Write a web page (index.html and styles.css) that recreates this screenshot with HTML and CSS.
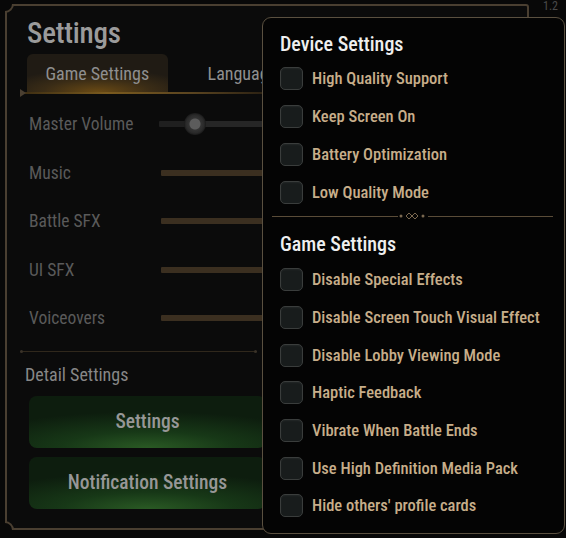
FILE: index.html
```html
<!DOCTYPE html>
<html>
<head>
<meta charset="utf-8">
<link rel="stylesheet" href="styles.css">
</head>
<body>
<div class="screen">
  <span class="version">1.2</span>
  <div class="frame">
    <span class="notch notch-tl"></span>
    <span class="notch notch-bl"></span>
    <div class="main">
      <h1 class="title">Settings</h1>
      <div class="tabs">
        <div class="tab active">Game Settings</div>
        <div class="tab">Language</div>
      </div>
      <div class="tabline"></div>
      <div class="sliders">
        <div class="srow"><span class="slabel">Master Volume</span><div class="track grey"><span class="knob"></span></div></div>
        <div class="srow"><span class="slabel">Music</span><div class="track"></div></div>
        <div class="srow"><span class="slabel">Battle SFX</span><div class="track"></div></div>
        <div class="srow"><span class="slabel">UI SFX</span><div class="track"></div></div>
        <div class="srow"><span class="slabel">Voiceovers</span><div class="track"></div></div>
      </div>
      <div class="divider"></div>
      <div class="detail">Detail Settings</div>
      <div class="btn">Settings</div>
      <div class="btn">Notification Settings</div>
    </div>
  </div>

  <div class="panel">
    <h2 class="ptitle">Device Settings</h2>
    <ul class="opts">
      <li class="opt"><span class="box"></span>High Quality Support</li>
      <li class="opt"><span class="box"></span>Keep Screen On</li>
      <li class="opt"><span class="box"></span>Battery Optimization</li>
      <li class="opt"><span class="box"></span>Low Quality Mode</li>
    </ul>
    <div class="orn">
      <svg width="30" height="8" viewBox="0 0 30 8">
        <circle cx="3" cy="4" r="1.5" fill="#7a6850"/>
        <path d="M8 4 L11 1 L14 4 L11 7 Z M14 4 L17 1 L20 4 L17 7 Z" fill="none" stroke="#7a6850" stroke-width="1"/>
        <circle cx="25" cy="4" r="1.5" fill="#7a6850"/>
      </svg>
    </div>
    <h2 class="ptitle second">Game Settings</h2>
    <ul class="opts game">
      <li class="opt"><span class="box"></span>Disable Special Effects</li>
      <li class="opt"><span class="box"></span>Disable Screen Touch Visual Effect</li>
      <li class="opt"><span class="box"></span>Disable Lobby Viewing Mode</li>
      <li class="opt"><span class="box"></span>Haptic Feedback</li>
      <li class="opt"><span class="box"></span>Vibrate When Battle Ends</li>
      <li class="opt"><span class="box"></span>Use High Definition Media Pack</li>
      <li class="opt"><span class="box"></span>Hide others' profile cards</li>
    </ul>
  </div>
</div>
</body>
</html>
```

FILE: styles.css
```css
* { box-sizing: border-box; margin: 0; padding: 0; }
html, body { width: 566px; height: 538px; overflow: hidden; background: #070707; }
body { font-family: Roboto, "Liberation Sans", sans-serif; font-stretch: condensed; }

.screen { position: relative; width: 566px; height: 538px; padding: 4px 0 0 5px; background: #080808; }

.version { position: absolute; left: 543px; top: 0; font-size: 12px; line-height: 12px; color: #4a4a4a; }

.frame {
  position: relative;
  width: 524px;
  height: 526px;
  border: 2px solid #4a3f31;
  border-radius: 3px;
  background: #0b0b0b;
}
.notch { position: absolute; width: 18px; height: 18px; border: 2px solid #4a3f31; border-radius: 50%; background: #080808; }
.notch-tl { left: -11px; top: -11px; clip-path: inset(50% 0 0 50%); }
.notch-bl { left: -11px; bottom: -11px; clip-path: inset(0 0 50% 50%); }

.main { padding: 9px 0 0 13px; width: 270px; }

.title { font-size: 29px; font-weight: 500; color: #9b9b9b; line-height: 36px; margin-left: 7px; letter-spacing: -0.2px; }

.tabs { display: flex; margin-top: 3px; margin-left: 7px; height: 38px; }
.tab { font-size: 18px; color: #8f8f8f; display: flex; align-items: center; justify-content: center; }
.tab.active {
  width: 147px;
  border-radius: 6px 6px 0 0;
  background: radial-gradient(ellipse 70% 60% at 50% 100%, #6a4a14 0%, #3a2c16 55%, #201b14 100%);
}
.tab:not(.active) { margin-left: 40px; }
.tabline { position: relative; height: 2px; width: 247px; background: linear-gradient(90deg, #3b2c12, #7a5a1e 35%, #5a4420 70%, #2a2012); }
.tabline::before { content: ""; position: absolute; left: 0; top: -3px; border-left: 6px solid #4a3f31; border-top: 4px solid transparent; border-bottom: 4px solid transparent; }

.sliders { margin-top: 6px; display: flex; flex-direction: column; }
.srow { height: 48.5px; display: flex; align-items: center; }
.slabel { width: 141px; padding-left: 9px; font-size: 17.5px; color: #5a5a5a; }
.track { width: 110px; height: 6px; background: #3b2f20; border-radius: 1px; }
.track.grey { position: relative; height: 6px; margin-left: -2px; background: linear-gradient(90deg, #1f1f1f 0 36px, #262626 36px); }
.knob { position: absolute; left: 25px; top: -8px; width: 22px; height: 22px; border-radius: 50%; background: radial-gradient(circle, #5c5c5c 0 5px, #333 6px, #2a2a2a 9px, #1a1a1a 11px); }

.divider { position: relative; height: 1px; width: 237px; margin: 8px 0 0 0; background: #30281c; }
.divider::before, .divider::after { content: ""; position: absolute; top: -1px; width: 3px; height: 3px; border-radius: 50%; background: #3a3228; }
.divider::before { left: 0; } .divider::after { right: 0; }

.detail { font-size: 18px; color: #878787; margin: 12px 0 0 5px; line-height: 22px; }

.btn {
  margin: 0 0 9px 9px;
  width: 237px;
  height: 52px;
  border-radius: 8px;
  display: flex; align-items: center; justify-content: center;
  font-size: 19.5px; color: #979797; font-weight: 500;
  background: radial-gradient(ellipse 80% 70% at 50% 100%, #2a5a24 0%, #173817 45%, #0d1d0e 100%);
}
.detail + .btn { margin-top: 10px; }

.panel {
  position: absolute;
  left: 262px; top: 17px;
  width: 303px; height: 517px;
  border: 1.5px solid #5a5040;
  border-radius: 9px;
  background: #040404;
  padding: 13px 0 0 17px;
}
.ptitle { font-size: 20px; font-weight: 500; color: #efefef; line-height: 26px; }
.ptitle.second { margin-top: 11px; }
.opts { list-style: none; margin-top: 2px; }
.opts.game { margin-top: 4px; }
.opt { height: 38px; display: flex; align-items: center; font-size: 16.5px; font-weight: 500; color: #c7ae8a; }
.opts.game .opt { height: 37.7px; }
.box {
  width: 23px; height: 23px; margin: 0 9px 0 0;
  border: 1.5px solid #3a3d3c; border-radius: 5px;
  background: #181c1c;
  box-shadow: inset 0 1px 2px rgba(255,255,255,0.05);
}
.orn { position: relative; margin: 1px 0 0 -8px; width: 281px; height: 8px; display: flex; justify-content: center; }
.orn::before { content: ""; position: absolute; left: 0; right: 0; top: 3.5px; height: 1px; background: #5a4c38; }
.orn svg { position: relative; background: #040404; }
```
